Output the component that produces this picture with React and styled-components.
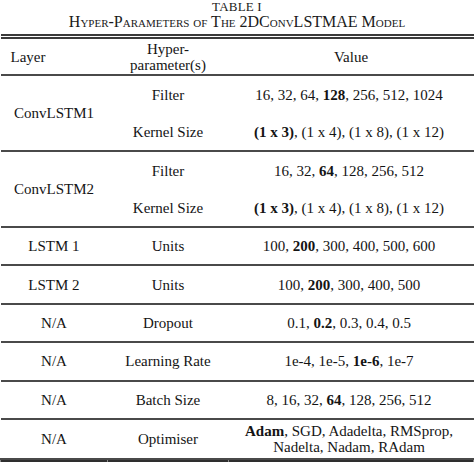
import React from "react";
import styled, { createGlobalStyle } from "styled-components";

const GlobalStyle = createGlobalStyle`
  html, body {
    margin: 0;
    padding: 0;
    background: #fff;
  }
  body {
    font-family: "Liberation Serif", "Times New Roman", serif;
    color: #141414;
  }
`;

const rows = [
  {
    layer: "ConvLSTM1",
    params: [
      ["Filter", ["16, 32, 64, ", <b key="b">128</b>, ", 256, 512, 1024"]],
      ["Kernel Size", [<b key="b">(1 x 3)</b>, ", (1 x 4), (1 x 8), (1 x 12)"]],
    ],
  },
  {
    layer: "ConvLSTM2",
    params: [
      ["Filter", ["16, 32, ", <b key="b">64</b>, ", 128, 256, 512"]],
      ["Kernel Size", [<b key="b">(1 x 3)</b>, ", (1 x 4), (1 x 8), (1 x 12)"]],
    ],
  },
  { layer: "LSTM 1", params: [["Units", ["100, ", <b key="b">200</b>, ", 300, 400, 500, 600"]]] },
  { layer: "LSTM 2", params: [["Units", ["100, ", <b key="b">200</b>, ", 300, 400, 500"]]] },
  { layer: "N/A", params: [["Dropout", ["0.1, ", <b key="b">0.2</b>, ", 0.3, 0.4, 0.5"]]] },
  { layer: "N/A", params: [["Learning Rate", ["1e-4, 1e-5, ", <b key="b">1e-6</b>, ", 1e-7"]]] },
  { layer: "N/A", params: [["Batch Size", ["8, 16, 32, ", <b key="b">64</b>, ", 128, 256, 512"]]] },
  {
    layer: "N/A",
    height: 38,
    params: [
      [
        "Optimiser",
        [<b key="b">Adam</b>, ", SGD, Adadelta, RMSprop,", <br key="br" />, "Nadelta, Nadam, RAdam"],
      ],
    ],
  },
];

// sub-rows of a two-row group are a little taller than single rows
const rowHeight = (row) => row.height || (row.params.length > 1 ? 37 : 36.4);

export default function App() {
  return (
    <Page>
      <GlobalStyle />
      <Caption>
        <Label>TABLE I</Label>
        <Title>Hyper-Parameters of The 2DConvLSTMAE Model</Title>
      </Caption>
      <Table>
        <colgroup>
          <col style={{ width: 107 }} />
          <col style={{ width: 121 }} />
          <col />
        </colgroup>
        <thead>
          <tr>
            <HeadCell $left>Layer</HeadCell>
            <HeadCell>
              Hyper-
              <br />
              parameter(s)
            </HeadCell>
            <HeadCell>Value</HeadCell>
          </tr>
        </thead>
        {rows.map((row, i) => (
          <Group key={i}>
            {row.params.map(([name, value], j) => (
              <tr key={j}>
                {j === 0 && <Cell rowSpan={row.params.length}>{row.layer}</Cell>}
                <Cell $h={rowHeight(row)}>{name}</Cell>
                <ValueCell $h={rowHeight(row)}>{value}</ValueCell>
              </tr>
            ))}
          </Group>
        ))}
        <tfoot>
          <tr>
            <FootCell />
            <FootCell />
            <FootCell />
          </tr>
        </tfoot>
      </Table>
    </Page>
  );
}

const Page = styled.div`
  width: 474px;
  height: 463px;
  overflow: hidden;
`;

const Caption = styled.div`
  text-align: center;
  height: 34px;
  color: #1a1a1a;
`;

const Label = styled.div`
  font-size: 13px;
  line-height: 14px;
  letter-spacing: 0.2px;
`;

const Title = styled.div`
  font-size: 16px;
  line-height: 15px;
  font-variant: small-caps;
`;

const Table = styled.table`
  width: 474px;
  border-collapse: collapse;
  table-layout: fixed;
  border-top: 5px double #3a3a3a;
  font-family: "Liberation Serif", "Times New Roman", serif;
  font-size: 15px;
  color: #141414;
`;

const HeadCell = styled.th`
  font-weight: normal;
  height: 35px;
  padding: 0 0 0 ${(p) => (p.$left ? "10px" : "0")};
  text-align: ${(p) => (p.$left ? "left" : "center")};
  line-height: 16px;
  border-bottom: 2px solid #4a4a4a;
  vertical-align: middle;
`;

const Group = styled.tbody`
  border-bottom: 2px solid #4a4a4a;
`;

const Cell = styled.td`
  text-align: center;
  vertical-align: middle;
  height: ${(p) => (p.$h ? `${p.$h}px` : "auto")};
  padding: 0;
  line-height: 16px;
`;

const ValueCell = styled(Cell)`
  padding-right: 4px;

  b {
    font-weight: bold;
  }
`;

const FootCell = styled.td`
  height: 2px;
  padding: 0;
  border-top: 1px solid #3a3a3a;
  background: #2e2e2e;
  border-left: 1px solid #888;
  border-right: 1px solid #888;
`;
